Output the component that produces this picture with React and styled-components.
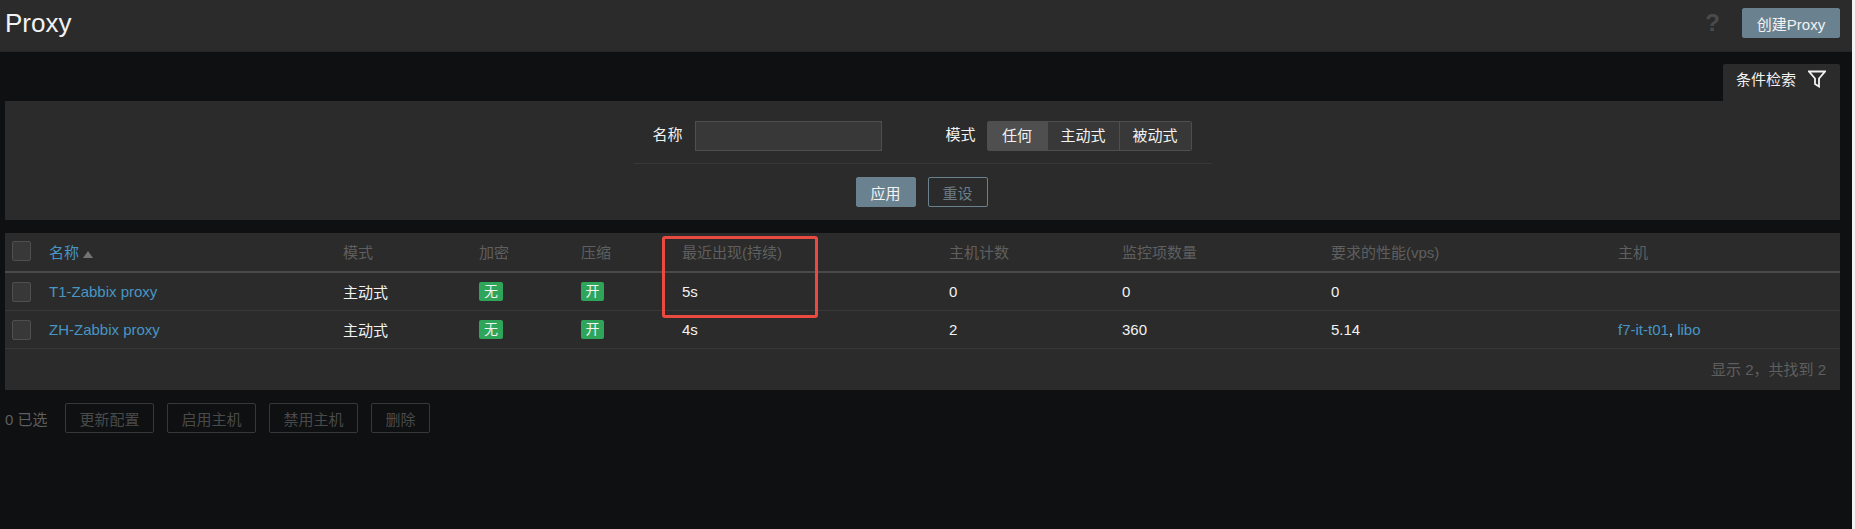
import React from "react";
import styled, { createGlobalStyle } from "styled-components";

const GlobalStyle = createGlobalStyle`
  html, body {
    margin: 0;
    padding: 0;
    background: #f2f2f2;
  }
  body {
    font-family: "Liberation Sans", "Noto Sans CJK SC", sans-serif;
    font-size: 15px;
    color: #f2f2f2;
  }
`;

const Page = styled.div`
  position: relative;
  width: 1852px;
  height: 529px;
  background: #0e1012;
  overflow: hidden;
`;

const Header = styled.header`
  height: 52px;
  box-sizing: border-box;
  display: flex;
  align-items: center;
  padding: 0 12px 5px 5px;
  background: #2b2b2b;
  border-bottom: 1px solid #262626;
`;

const Title = styled.h1`
  flex: 1;
  margin: 0;
  font-size: 26px;
  font-weight: 400;
  color: #f2f2f2;
`;

const Help = styled.span`
  margin-right: 22px;
  font-size: 24px;
  font-weight: 700;
  color: #4a4a4a;
`;

const Button = styled.button`
  height: 30px;
  box-sizing: border-box;
  padding: 0;
  width: ${p => p.$w}px;
  font: inherit;
  border-radius: 2px;
  color: ${p => (p.$outline ? "#6a7b85" : "#f2f2f2")};
  background: ${p => (p.$outline ? "transparent" : "#6a8290")};
  border: 1px solid #6a8290;
`;

const Content = styled.main`
  padding: 12px 12px 0 5px;
`;

const TabRow = styled.div`
  display: flex;
  justify-content: flex-end;
`;

const FilterTab = styled.div`
  width: 117px;
  height: 37px;
  box-sizing: border-box;
  display: flex;
  align-items: flex-start;
  justify-content: space-between;
  padding: 6px 14px 0 13px;
  background: #2b2b2b;
  border-radius: 2px 2px 0 0;
  line-height: 20px;
  color: #f2f2f2;
  svg {
    display: block;
  }
`;

const FilterPanel = styled.section`
  height: 119px;
  box-sizing: border-box;
  padding-top: 20px;
  background: #2b2b2b;
  display: flex;
  flex-direction: column;
  align-items: center;
`;

const FilterForm = styled.div`
  width: 578px;
  height: 43px;
  box-sizing: border-box;
  display: flex;
  padding-left: 19px;
  border-bottom: 1px solid #383838;
`;

const Field = styled.div`
  display: flex;
  align-items: flex-start;
  margin-right: ${p => p.$gap || 0}px;
`;

const Label = styled.label`
  line-height: 30px;
  margin-right: ${p => p.$gap}px;
  margin-top: -1px;
`;

const TextInput = styled.input`
  width: 187px;
  height: 30px;
  box-sizing: border-box;
  padding: 0 5px;
  background: #383838;
  border: 1px solid #4f4f4f;
  color: #f2f2f2;
`;

const Segments = styled.div`
  display: flex;
  height: 30px;
  box-sizing: border-box;
  border: 1px solid #4f4f4f;
  border-radius: 2px;
  overflow: hidden;
`;

const Segment = styled.div`
  width: ${p => p.$w}px;
  line-height: 27px;
  text-align: center;
  background: ${p => (p.$active ? "#4f4f4f" : "#383838")};
  & + & {
    border-left: 1px solid #4f4f4f;
  }
`;

const FilterButtons = styled.div`
  display: flex;
  gap: 12px;
  margin: 13px 2px 0 0;
`;

const TablePanel = styled.section`
  position: relative;
  margin-top: 13px;
  height: 157px;
  background: #2b2b2b;
`;

const Row = styled.div`
  display: grid;
  grid-template-columns: 37px 294px 136px 102px 101px 267px 173px 209px 287px 1fr;
  align-items: center;
  box-sizing: border-box;
  height: ${p => (p.$head ? 40 : 38)}px;
  padding-left: 7px;
  padding-bottom: ${p => (p.$head ? 2 : 0)}px;
  border-bottom: ${p => (p.$head ? "2px solid #4a4a4a" : "1px solid #383838")};
  color: ${p => (p.$head ? "#5f5f5f" : "#f2f2f2")};
`;

const Check = styled.span`
  display: block;
  width: 19px;
  height: 20px;
  box-sizing: border-box;
  background: #383838;
  border: 1px solid #4f4f4f;
  border-radius: 2px;
`;

const Link = styled.a`
  color: #4796c4;
`;

const SortArrow = styled.span`
  display: inline-block;
  margin-left: 4px;
  border-left: 5px solid transparent;
  border-right: 5px solid transparent;
  border-bottom: 7px solid #737373;
`;

const Tag = styled.span`
  display: inline-block;
  width: ${p => p.$w}px;
  height: 19px;
  line-height: 19px;
  font-size: 14px;
  text-align: center;
  color: #f2f2f2;
  background: #2fa55a;
  border-radius: 2px;
`;

const Paging = styled.div`
  padding: 9px 14px 0 0;
  text-align: right;
  color: #5f5f5f;
`;

const Highlight = styled.div`
  position: absolute;
  left: 662px;
  top: 236px;
  width: 156px;
  height: 82px;
  box-sizing: border-box;
  border: 3px solid #ea4a40;
  border-radius: 3px;
`;

const ActionBar = styled.div`
  display: flex;
  align-items: center;
  margin-top: 13px;
`;

const Selected = styled.span`
  width: 60px;
  color: #5f5f5f;
`;

const ActionButton = styled.button`
  width: ${p => p.$w}px;
  height: 30px;
  box-sizing: border-box;
  margin-right: 13px;
  padding: 0;
  font: inherit;
  color: #4a4a4a;
  background: transparent;
  border: 1px solid #383838;
  border-radius: 2px;
`;

const proxies = [
  { name: "T1-Zabbix proxy", seen: "5s", hosts: "0", items: "0", vps: "0", list: [] },
  { name: "ZH-Zabbix proxy", seen: "4s", hosts: "2", items: "360", vps: "5.14", list: ["f7-it-t01", "libo"] }
];

export default function App() {
  return (
    <Page>
      <GlobalStyle />
      <Header>
        <Title>Proxy</Title>
        <Help>?</Help>
        <Button $w={98}>创建Proxy</Button>
      </Header>
      <Content>
        <TabRow>
          <FilterTab>
            条件检索
            <svg width="18" height="18" viewBox="0 0 18 18" fill="none" stroke="#f2f2f2" strokeWidth="1.8">
              <path d="M1 1.5h16l-6 7v8l-4-2.5V8.5z" />
            </svg>
          </FilterTab>
        </TabRow>
        <FilterPanel>
          <FilterForm>
            <Field $gap={64}>
              <Label $gap={12}>名称</Label>
              <TextInput />
            </Field>
            <Field>
              <Label $gap={11}>模式</Label>
              <Segments>
                <Segment $w={59} $active>任何</Segment>
                <Segment $w={71}>主动式</Segment>
                <Segment $w={71}>被动式</Segment>
              </Segments>
            </Field>
          </FilterForm>
          <FilterButtons>
            <Button $w={60}>应用</Button>
            <Button $w={60} $outline>重设</Button>
          </FilterButtons>
        </FilterPanel>
        <TablePanel>
          <Row $head>
            <Check />
            <span>
              <Link>名称</Link>
              <SortArrow />
            </span>
            <span>模式</span>
            <span>加密</span>
            <span>压缩</span>
            <span>最近出现(持续)</span>
            <span>主机计数</span>
            <span>监控项数量</span>
            <span>要求的性能(vps)</span>
            <span>主机</span>
          </Row>
          {proxies.map(p => (
            <Row key={p.name}>
              <Check />
              <Link>{p.name}</Link>
              <span>主动式</span>
              <span><Tag $w={24}>无</Tag></span>
              <span><Tag $w={23}>开</Tag></span>
              <span>{p.seen}</span>
              <span>{p.hosts}</span>
              <span>{p.items}</span>
              <span>{p.vps}</span>
              <span>
                {p.list.map((h, i) => (
                  <React.Fragment key={h}>
                    {i > 0 && ", "}
                    <Link>{h}</Link>
                  </React.Fragment>
                ))}
              </span>
            </Row>
          ))}
          <Paging>显示 2，共找到 2</Paging>
        </TablePanel>
        <ActionBar>
          <Selected>0 已选</Selected>
          <ActionButton $w={89}>更新配置</ActionButton>
          <ActionButton $w={89}>启用主机</ActionButton>
          <ActionButton $w={89}>禁用主机</ActionButton>
          <ActionButton $w={59}>删除</ActionButton>
        </ActionBar>
      </Content>
      <Highlight />
    </Page>
  );
}
